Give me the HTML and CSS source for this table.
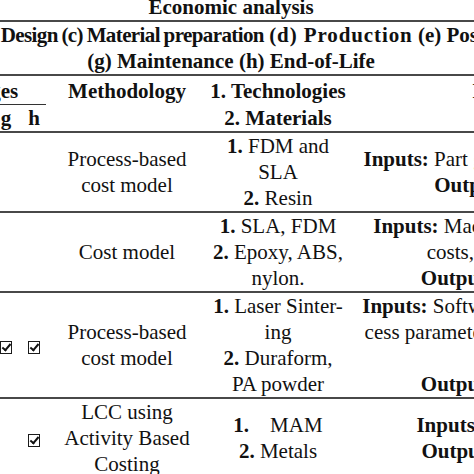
FILE: index.html
```html
<!DOCTYPE html>
<html>
<head>
<link rel="stylesheet" href="styles.css">
</head>
<body>
<div class="crop">
<table class="econ">
  <colgroup>
    <col class="st"><col class="st"><col class="st"><col class="st">
    <col class="st"><col class="st"><col class="st"><col class="st">
    <col class="meth">
    <col class="tech">
    <col class="info">
  </colgroup>
  <tr class="cap">
    <th colspan="11" class="rule">Economic analysis</th>
  </tr>
  <tr class="cap">
    <th colspan="11" class="rule">(a) Conceptions (b) <span class="tight">Design (c) Material preparation</span> <span class="wide">(d) Production</span> (e) Post-processing (f) Use<br>(g) Maintenance (h) End-of-Life</th>
  </tr>
  <tr class="head top">
    <th colspan="8"><span class="midrule">AM Life Cycle Stages</span></th>
    <th>Methodology</th>
    <th>1. Technologies</th>
    <th>Data</th>
  </tr>
  <tr class="head rule">
    <th>a</th><th>b</th><th>c</th><th>d</th>
    <th>e</th><th>f</th><th>g</th><th>h</th>
    <th></th>
    <th>2. Materials</th>
    <th></th>
  </tr>
  <tr class="row rule">
    <td><span class="chk"></span></td><td><span class="chk"></span></td>
    <td><span class="chk"></span></td><td></td>
    <td></td><td></td><td></td><td></td>
    <td>Process-based<br>cost model</td>
    <td><b>1.</b> FDM and<br>SLA<br><b>2.</b> Resin</td>
    <td><b>Inputs:</b> Part geometry, volume<br><b>Outputs:</b> cost</td>
  </tr>
  <tr class="row rule">
    <td></td><td></td><td><span class="chk"></span></td><td><span class="chk"></span></td>
    <td></td><td></td><td></td><td></td>
    <td>Cost model</td>
    <td><b>1.</b> SLA, FDM<br><b>2.</b> Epoxy, ABS,<br>nylon.</td>
    <td><b>Inputs:</b> Machine and energy<br>costs, labor cost<br><b>Outputs:</b> Pricing</td>
  </tr>
  <tr class="row rule">
    <td></td><td></td><td></td><td><span class="chk"></span></td>
    <td><span class="chk"></span></td><td></td>
    <td><span class="chk on"></span></td><td><span class="chk on"></span></td>
    <td>Process-based<br>cost model</td>
    <td><b>1.</b> Laser Sinter-<br>ing<br><b>2.</b> Duraform,<br>PA powder</td>
    <td><b>Inputs:</b> Software costs for pro-<br>cess parameters, material costs<br>time<br><b>Outputs:</b> Pricing</td>
  </tr>
  <tr class="row">
    <td><span class="chk"></span></td><td></td><td></td><td></td>
    <td></td><td><span class="chk"></span></td><td></td>
    <td><span class="chk on"></span></td>
    <td>LCC using<br>Activity Based<br>Costing</td>
    <td><b>1.</b>&ensp;&ensp;MAM<br><b>2.</b> Metals</td>
    <td><b>Inputs</b>: Activities,<br><b>Outputs</b>: Pricing</td>
  </tr>
</table>
</div>
</body>
</html>
```

FILE: styles.css
```css
body {
  margin: 0;
  background: #ffffff;
}

.crop {
  width: 474px;
  height: 474px;
  overflow: hidden;
}

.econ {
  border-collapse: collapse;
  table-layout: fixed;
  width: 814px;
  margin-left: -176px;
  margin-top: -6px;
  font-family: "Liberation Serif", serif;
  font-size: 21px;
  line-height: 26px;
  color: #111111;
}

col.st {
  width: 28px;
}

col.meth {
  width: 158px;
}

col.tech {
  width: 144px;
}

col.info {
  width: 288px;
}

.econ th,
.econ td {
  padding: 0;
  text-align: center;
  vertical-align: middle;
  white-space: nowrap;
}

.econ tr.rule > th,
.econ tr.rule > td,
.econ th.rule {
  border-bottom: 2px solid #484848;
}

.tight {
  letter-spacing: -0.6px;
  word-spacing: -1px;
}

.wide {
  letter-spacing: 0.9px;
}

.head th {
  vertical-align: top;
}

.head.top th {
  padding-top: 2px;
}

.midrule {
  display: block;
  box-sizing: border-box;
  width: 222px;
  padding-right: 34px;
  border-bottom: 1px solid #333333;
}

.chk {
  display: none;
}

.chk.on {
  display: inline-block;
  width: 10px;
  height: 11px;
  border: 1.7px solid #1a1a1a;
  position: relative;
  vertical-align: middle;
}

.chk.on::after {
  content: "";
  position: absolute;
  left: 3px;
  top: 0px;
  width: 3px;
  height: 7px;
  border-right: 2px solid #111111;
  border-bottom: 2px solid #111111;
  transform: rotate(40deg);
}
```
